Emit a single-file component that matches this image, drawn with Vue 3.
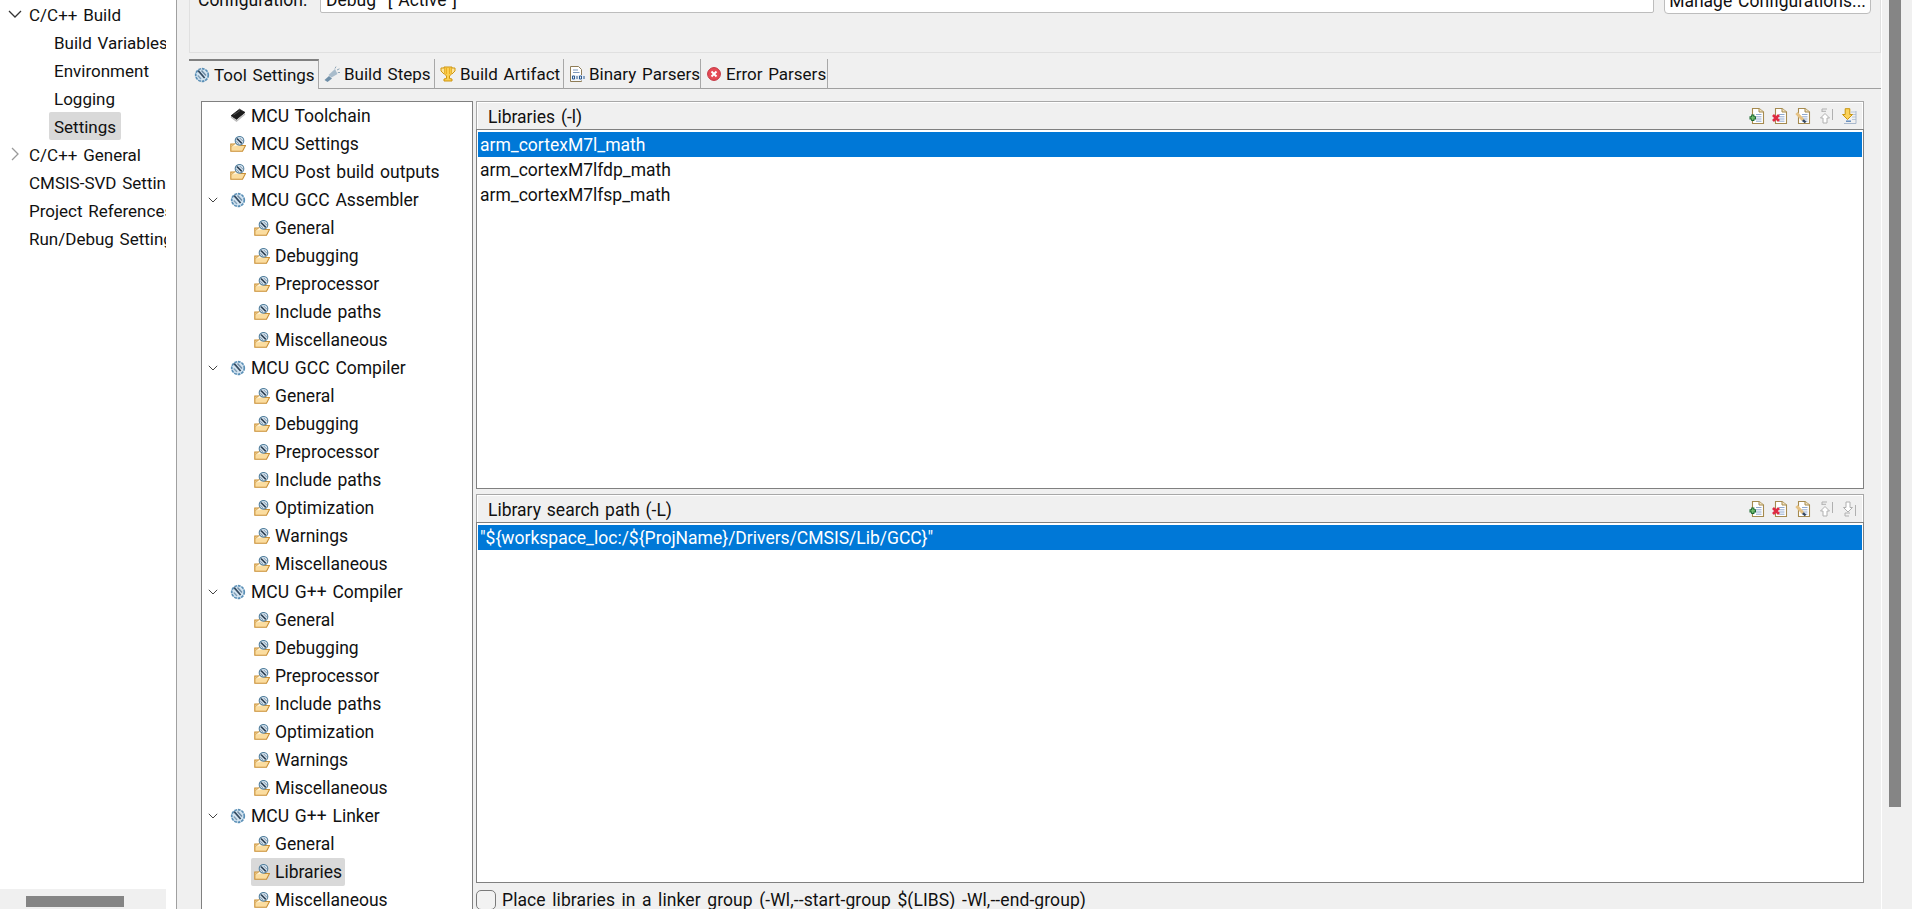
<script setup>
const sideItems = [
  { t: 'C/C++ Build', lvl: 0, tw: 'open' },
  { t: 'Build Variables', lvl: 1 },
  { t: 'Environment', lvl: 1 },
  { t: 'Logging', lvl: 1 },
  { t: 'Settings', lvl: 1, sel: true },
  { t: 'C/C++ General', lvl: 0, tw: 'closed' },
  { t: 'CMSIS-SVD Settings', lvl: 0 },
  { t: 'Project References', lvl: 0 },
  { t: 'Run/Debug Settings', lvl: 0 }
]
const tabs = [
  { t: 'Tool Settings', i: 'tool', active: true },
  { t: 'Build Steps', i: 'steps' },
  { t: 'Build Artifact', i: 'trophy' },
  { t: 'Binary Parsers', i: 'binary' },
  { t: 'Error Parsers', i: 'error' }
]
const group = (name, kids) => [
  { t: name, i: 'tool', lvl: 0, open: true },
  ...kids.map((t) => ({ t, i: 'folder', lvl: 1 }))
]
const full = ['General', 'Debugging', 'Preprocessor', 'Include paths', 'Optimization', 'Warnings', 'Miscellaneous']
const rows = [
  { t: 'MCU Toolchain', i: 'chip', lvl: 0 },
  { t: 'MCU Settings', i: 'folder', lvl: 0 },
  { t: 'MCU Post build outputs', i: 'folder', lvl: 0 },
  ...group('MCU GCC Assembler', ['General', 'Debugging', 'Preprocessor', 'Include paths', 'Miscellaneous']),
  ...group('MCU GCC Compiler', full),
  ...group('MCU G++ Compiler', full),
  { t: 'MCU G++ Linker', i: 'tool', lvl: 0, open: true },
  { t: 'General', i: 'folder', lvl: 1 },
  { t: 'Libraries', i: 'folder', lvl: 1, sel: true },
  { t: 'Miscellaneous', i: 'folder', lvl: 1 }
]
const panels = [
  { title: 'Libraries (-l)', items: ['arm_cortexM7l_math', 'arm_cortexM7lfdp_math', 'arm_cortexM7lfsp_math'], down: 'down-on' },
  { title: 'Library search path (-L)', items: ['"${workspace_loc:/${ProjName}/Drivers/CMSIS/Lib/GCC}"'], down: 'down-off' }
]
const comboText = 'Debug  [ Active ]'
</script>

<template>
  <svg class="defs" aria-hidden="true">
    <defs>
      <symbol id="tool" viewBox="0 0 16 16">
        <circle cx="8" cy="8" r="6.3" fill="#d3e4f1" stroke="#5a8fb6" stroke-width="1.7" stroke-dasharray="2.8 0.8" />
        <path d="M4.2 3.6 10.6 11" stroke="#344a60" stroke-width="1.7" />
        <path d="M7.5 3.5 12 8.5" stroke="#6f8ca5" stroke-width="1.4" />
        <path d="M3.8 8.5 7 12" stroke="#7f9db5" stroke-width="1.3" />
      </symbol>
      <symbol id="folder" viewBox="0 0 16 16">
        <path d="M.8 8 .8 15.2 12.5 15.2 15.5 9.5 6 9.5 4.5 8Z" fill="#fbdda0" stroke="#c98f35" stroke-width="1.1" />
        <path d="M1.5 10.5 6.5 6.5 11 9.5" fill="#fff4d8" stroke="#c98f35" stroke-width="0.7" />
        <circle cx="9.5" cy="4.8" r="4.3" fill="#dbe8f3" stroke="#55819f" stroke-width="1.1" />
        <path d="M7 2.6 11.8 7.4" stroke="#2c3f53" stroke-width="1.5" />
        <path d="M9.5 1.8 13.2 5.5M6.2 5 9 7.8" stroke="#6f879c" stroke-width="0.9" />
      </symbol>
      <symbol id="chip" viewBox="0 0 16 16">
        <path d="M1 7.8 9.5 1.2 15 4.4 6.5 11.4Z" fill="#1b1b1b" stroke="#1b1b1b" stroke-width="0.8" stroke-linejoin="round" />
        <path d="M1 9 6.5 13 15 6" fill="none" stroke="#bcbcbc" stroke-width="1.4" />
        <path d="M3.5 7 10 2.6" stroke="#5a5a5a" stroke-width="0.8" />
      </symbol>
      <symbol id="steps" viewBox="0 0 16 16">
        <path d="M.5 14 5 10 8 12.5 3.5 16Z" fill="#6f8fa8" />
        <path d="M4.5 9 11 3 13.5 8 7.5 11.5Z" fill="#a9bccb" />
        <path d="M11 2.5 12 .6M13 4 15.5 2.8M13.8 6.5 16 6.5" stroke="#8ea5b6" stroke-width="1" />
      </symbol>
      <symbol id="trophy" viewBox="0 0 16 16">
        <path d="M4 1 12 1 12 7.5 9.5 10 9.5 12.5 12 13 12 15 4 15 4 13 6.5 12.5 6.5 10 4 7.5Z" fill="#fcd04f" stroke="#cf9511" stroke-width="1" />
        <path d="M4 2 1 2 1 5 4 8M12 2 15 2 15 5 12 8" fill="#fde59a" stroke="#cf9511" stroke-width="1" />
        <path d="M6.3 2V8M9.7 2V8" stroke="#e8a51c" stroke-width="1" />
      </symbol>
      <symbol id="binary" viewBox="0 0 16 16">
        <path d="M1.5 .5 9.5 .5 12.5 3.5 12.5 15.5 1.5 15.5Z" fill="#fff" stroke="#8f7c56" stroke-width="1" />
        <path d="M4 4H9M4 6.5H10.5" stroke="#7c98bb" stroke-width="1" />
        <rect x="2.5" y="9" width="13" height="5.5" fill="#eaf0f7" />
        <path d="M3.5 10H5.5V13H3.5ZM8 10V13M10.5 10H12.5V13H10.5ZM15 10V13" fill="none" stroke="#2d5a8f" stroke-width="1" />
      </symbol>
      <symbol id="error" viewBox="0 0 16 16">
        <circle cx="8" cy="8" r="6.4" fill="#e54a55" stroke="#c23340" stroke-width="1" />
        <path d="M5.5 5.5 10.5 10.5M10.5 5.5 5.5 10.5" stroke="#fff" stroke-width="1.9" />
      </symbol>
      <symbol id="doc" viewBox="0 0 16 16">
        <path d="M3.5 .5 10 .5 14.5 4 14.5 15.5 3.5 15.5Z" fill="#fff" stroke="#a58a4f" stroke-width="1.1" />
        <path d="M10 .5 10 4 14.5 4" fill="#f2e3c0" stroke="#a58a4f" stroke-width="1" />
        <path d="M7 6.5H12.5M7 8.8H12.5M7 11H12.5M7 13.2H12.5" stroke="#8fa9cf" stroke-width="1" />
      </symbol>
      <symbol id="add" viewBox="0 0 16 16">
        <use href="#doc" width="16" height="16" />
        <path d="M3.8 6.5V13M.5 9.8H7" stroke="#17672e" stroke-width="3.2" />
        <path d="M3.8 7.5V12M1.5 9.8H6" stroke="#7cc576" stroke-width="1.3" />
      </symbol>
      <symbol id="del" viewBox="0 0 16 16">
        <use href="#doc" width="16" height="16" />
        <path d="M1 7 7 13M7 7 1 13" stroke="#de2b43" stroke-width="2.7" />
      </symbol>
      <symbol id="edit" viewBox="0 0 16 16">
        <use href="#doc" width="16" height="16" />
        <path d="M1.5 5 8 12" stroke="#e5c285" stroke-width="3.2" />
        <path d="M8 12 10.5 14.5" stroke="#36465c" stroke-width="2.4" />
      </symbol>
      <symbol id="up-off" viewBox="0 0 16 16">
        <path d="M7 5.5 11.5 10 9 10 9 15 5 15 5 10 2.5 10Z" fill="#fff" stroke="#b0b0b0" stroke-width="1" />
        <path d="M4 1H9M4 1V4M4 3.3H8M14.5 1V12" fill="none" stroke="#b0b0b0" stroke-width="1" />
      </symbol>
      <symbol id="down-off" viewBox="0 0 16 16">
        <path d="M7 11 11.5 6.5 9 6.5 9 1 5 1 5 6.5 2.5 6.5Z" fill="#fff" stroke="#b0b0b0" stroke-width="1" />
        <path d="M4 12H9M4 12V15M4 15H8M14.5 4V15" fill="none" stroke="#b0b0b0" stroke-width="1" />
      </symbol>
      <symbol id="down-on" viewBox="0 0 16 16">
        <path d="M10 4H15M10 6.5H15M11 9H15M11 11.5H15" stroke="#b9c6d8" stroke-width="1" />
        <path d="M15 3V15.5H3" fill="none" stroke="#a9b8cc" stroke-width="1" />
        <path d="M5 13.2H10" stroke="#5d86ba" stroke-width="1.4" />
        <path d="M6.5 11.5 11.5 6.5 8.8 6.5 8.8 .7 4.2 .7 4.2 6.5 1.5 6.5Z" fill="#fbd25a" stroke="#c9950d" stroke-width="1" />
      </symbol>
    </defs>
  </svg>

  <div class="window">
    <aside class="side">
      <div class="side-tree">
        <div v-for="s in sideItems" :key="s.t" class="side-row" :class="'lvl' + s.lvl">
          <svg v-if="s.tw" class="side-tw" viewBox="0 0 14 14">
            <path v-if="s.tw === 'open'" d="M1 4 7 10 13 4" fill="none" stroke="#333" stroke-width="1.3" />
            <path v-else d="M4 1 10 7 4 13" fill="none" stroke="#9a9a9a" stroke-width="1.3" />
          </svg>
          <span class="side-label" :class="{ sel: s.sel }">{{ s.t }}</span>
        </div>
      </div>
      <div class="hscroll"><div class="hthumb"></div></div>
    </aside>

    <main class="main">
      <div class="page">
        <section class="config">
          <span class="cfg-label">Configuration:</span>
          <div class="combo">
            <span>{{ comboText }}</span>
            <svg class="combo-arrow" viewBox="0 0 10 6"><path d="M1 1 5 5 9 1" fill="none" stroke="#555" stroke-width="1" /></svg>
          </div>
          <button class="manage">Manage Configurations...</button>
        </section>

        <nav class="tabs">
          <div v-for="t in tabs" :key="t.t" class="tab" :class="[{ active: t.active }, 'tab-' + t.i]">
            <svg class="ic"><use :href="'#' + t.i" /></svg>
            <span>{{ t.t }}</span>
          </div>
          <div class="tabs-rest"></div>
        </nav>

        <div class="body">
          <div class="tree">
            <div v-for="(r, n) in rows" :key="n" class="row" :class="'tlvl' + r.lvl">
              <svg v-if="r.open" class="tw" viewBox="0 0 10 6"><path d="M.8 .8 5 5 9.2 .8" fill="none" stroke="#444" stroke-width="1" /></svg>
              <div class="row-in" :class="{ sel: r.sel }">
                <svg class="ic"><use :href="'#' + r.i" /></svg>
                <span>{{ r.t }}</span>
              </div>
            </div>
          </div>

          <div class="right">
            <section v-for="p in panels" :key="p.title" class="panel">
              <header class="phead">
                <span class="ptitle">{{ p.title }}</span>
                <div class="tools">
                  <svg class="ic"><use href="#add" /></svg>
                  <svg class="ic"><use href="#del" /></svg>
                  <svg class="ic"><use href="#edit" /></svg>
                  <svg class="ic"><use href="#up-off" /></svg>
                  <svg class="ic"><use :href="'#' + p.down" /></svg>
                </div>
              </header>
              <div class="list">
                <div v-for="(it, n) in p.items" :key="it" class="item" :class="{ on: n === 0 }">{{ it }}</div>
              </div>
            </section>
            <label class="check">
              <span class="box"></span>
              <span class="check-text">Place libraries in a linker group (-Wl,--start-group $(LIBS) -Wl,--end-group)</span>
            </label>
          </div>
        </div>
      </div>
      <div class="edge">
        <div class="vthumb"></div>
      </div>
    </main>
  </div>
</template>

<style>
html, body { margin: 0; background: #fff; overflow: hidden; }
</style>

<style scoped>
.defs { position: absolute; width: 0; height: 0; }
.window {
  display: flex;
  height: 909px;
  overflow: hidden;
  background: #fff;
  color: #111;
  font-family: Roboto, "Open Sans", sans-serif;
  font-size: 17.5px;
  word-spacing: 1.5px;
}
.side { width: 176px; flex: none; display: flex; flex-direction: column; font-size: 17px; }
.side-tree { flex: 1; width: 166px; overflow: hidden; }
.side-row { position: relative; height: 28px; display: flex; align-items: center; white-space: nowrap; padding-top: 1px; box-sizing: border-box; }
.side-row.lvl0 { padding-left: 29px; }
.side-row.lvl1 { padding-left: 49px; }
.side-label { padding: 0 5px; margin-left: -5px; line-height: 28px; border-radius: 2px; }
.lvl1 .side-label { margin-left: 0; }
.side-label.sel { background: #d9d9d9; margin-top: -1px; line-height: 28px; padding-top: 1px; height: 27px; }
.side-tw { position: absolute; left: 8px; top: 7px; width: 14px; height: 14px; }
.hscroll { width: 166px; height: 20px; background: #f0f0f0; padding-top: 7px; box-sizing: border-box; }
.hthumb { width: 98px; height: 11px; margin-left: 26px; background: #858585; }

.main { flex: 1; display: flex; background: #f0f0f0; border-left: 1px solid #a0a0a0; min-width: 0; }
.page { width: 1692px; margin-left: 12px; flex: none; display: flex; flex-direction: column; }
.config {
  height: 53px;
  box-sizing: border-box;
  flex: none;
  overflow: hidden;
  display: flex;
  align-items: flex-end;
  padding: 0 9px 39px 8px;
  border: solid #e0e0e0;
  border-width: 0 1px 1px 1px;
}
.cfg-label { width: 122px; line-height: 26px; flex: none; }
.combo {
  flex: 1;
  height: 26px;
  position: relative;
  background: #fff;
  border: 1px solid #bdbdbd;
  border-radius: 2px;
  box-sizing: border-box;
  padding-left: 5px;
  line-height: 24px;
  white-space: pre;
}
.combo-arrow { position: absolute; right: 7px; top: 6px; width: 10px; height: 6px; }
.manage {
  width: 207px;
  height: 27px;
  margin: 0 0 -1px 10px;
  padding: 0;
  background: #fff;
  border: 1px solid #bdbdbd;
  border-radius: 4px;
  font: inherit;
  word-spacing: inherit;
  color: inherit;
}

.tabs { display: flex; height: 30px; margin-top: 6px; flex: none; font-size: 17px; }
.tab {
  display: flex;
  align-items: center;
  box-sizing: border-box;
  border-right: 1px solid #a8a8a8;
  border-bottom: 1px solid #a0a0a0;
  white-space: nowrap;
  padding-top: 1px;
}
.tab .ic { margin-right: 4px; }
.tab.active { width: 130px; padding-left: 5px; padding-top: 0; border-top: 2px solid #808080; border-bottom: 0; }
.tab-steps { width: 116px; padding-left: 5px; }
.tab-trophy { width: 129px; padding-left: 5px; }
.tab-binary { width: 137px; padding-left: 5px; }
.tab-error { width: 127px; padding-left: 5px; }
.tabs-rest { flex: 1; border-bottom: 1px solid #a0a0a0; }

.body { flex: 1; min-height: 0; display: flex; padding: 12px 0 0 12px; }
.tree {
  width: 272px;
  flex: none;
  box-sizing: border-box;
  background: #fff;
  border: 1px solid #808080;
  border-bottom: 0;
  overflow: hidden;
}
.row { position: relative; height: 28px; display: flex; align-items: center; white-space: nowrap; }
.tlvl0 { padding-left: 25px; }
.tlvl1 { padding-left: 49px; }
.row-in { display: flex; align-items: center; height: 28px; padding: 0 3px; border-radius: 2px; }
.row-in .ic { margin-right: 5px; }
.row-in.sel { background: #d9d9d9; }
.tw { position: absolute; left: 6px; top: 11px; width: 10px; height: 6px; }
.ic { width: 16px; height: 16px; flex: none; }

.right { width: 1388px; margin-left: 3px; flex: none; display: flex; flex-direction: column; }
.panel { height: 388px; flex: none; box-sizing: border-box; display: flex; flex-direction: column; margin-bottom: 5px; }
.panel:nth-of-type(2) { height: 389px; margin-bottom: 7px; }
.phead {
  height: 28px;
  flex: none;
  box-sizing: border-box;
  display: flex;
  align-items: center;
  justify-content: space-between;
  border: 1px solid #a8a8a8;
  border-bottom: 0;
  box-shadow: inset 1px 1px 0 #fff, inset -1px 0 0 #fff;
  padding-left: 11px;
}
.ptitle { position: relative; top: 1px; }
.tools { display: flex; gap: 7px; margin-right: 6px; }
.list { flex: 1; background: #fff; border: 1px solid #808080; padding: 2px 1px 0 1px; }
.item { height: 25px; line-height: 26px; padding-left: 2px; }
.item.on { background: #0078d7; color: #fff; }
.check { display: flex; align-items: center; height: 20px; }
.box { width: 20px; height: 20px; box-sizing: border-box; border: 1px solid #7a7a7a; border-radius: 5px; background: #f2f2f2; margin-right: 6px; }
.check-text { letter-spacing: 0.1px; word-spacing: 2px; }

.edge { flex: 1; border-left: 1px solid #fff; padding-left: 7px; }
.vthumb { width: 12px; height: 807px; background: #858585; }
</style>
